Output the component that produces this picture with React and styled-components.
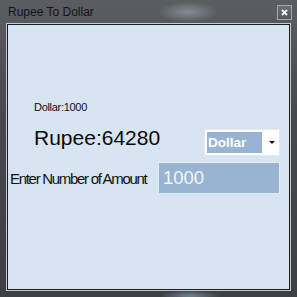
import React from 'react';
import styled, { createGlobalStyle } from 'styled-components';

const GlobalStyle = createGlobalStyle`
    html, body {
        margin: 0;
        padding: 0;
        background: #4b4e53;
    }
    * {
        box-sizing: border-box;
    }
`;

const Window = styled.div`
    width: 297px;
    height: 297px;
    display: flex;
    flex-direction: column;
    background:
        radial-gradient(ellipse 30px 10px at 188px 12px, rgba(170, 180, 190, 0.55), transparent),
        radial-gradient(ellipse 30px 6px at 190px 296px, rgba(150, 175, 200, 0.6), transparent),
        linear-gradient(to bottom, #5a5e63, #45484d 40%, #3d4044);
    font-family: "Liberation Sans", Arial, sans-serif;
`;

const TitleBar = styled.div`
    height: 22px;
    display: flex;
    align-items: center;
    justify-content: space-between;
    padding: 0 5px 0 8px;
`;

const Title = styled.span`
    font-size: 12px;
    color: #141414;
    padding-top: 2px;
`;

const CloseButton = styled.div`
    width: 15px;
    height: 15px;
    margin-top: 3px;
    border: 1px solid #a4a8ad;
    background: linear-gradient(to bottom, #6e7278, #52555b);
    display: flex;
    align-items: center;
    justify-content: center;
`;

const Frame = styled.div`
    flex: 1;
    margin: 1px 6px 6px 6px;
    border: 1px solid #c4c9ce;
    display: flex;
`;

const Client = styled.div`
    flex: 1;
    border: 1px solid #1c1c1c;
    background: #d7e4f2;
    padding: 76px 9px 0 2px;
    display: flex;
    flex-direction: column;
`;

const SmallLabel = styled.div`
    font-size: 11px;
    line-height: 13px;
    letter-spacing: -0.3px;
    color: #111;
    padding-left: 24px;
`;

const Row = styled.div`
    display: flex;
    align-items: ${({ align }) => align || 'center'};
    justify-content: space-between;
    margin-top: ${({ gap }) => gap}px;
`;

const BigValue = styled.div`
    font-size: 21px;
    line-height: 24px;
    color: #0a0a0a;
    padding-left: 24px;
`;

const Dropdown = styled.div`
    width: 76px;
    height: 27px;
    margin-top: 3px;
    background: #fff;
    border: 1px solid #e3e9f0;
    display: flex;
    align-items: center;
    padding: 2px;
`;

const Selected = styled.div`
    width: 55px;
    height: 21px;
    background: #99b4d1;
    color: #fff;
    font-weight: bold;
    font-size: 13.5px;
    line-height: 21px;
    padding-left: 1px;
`;

const Arrow = styled.div`
    margin-left: 7px;
    width: 0;
    height: 0;
    border-left: 3px solid transparent;
    border-right: 3px solid transparent;
    border-top: 3px solid #111;
`;

const FieldLabel = styled.div`
    font-size: 15px;
    letter-spacing: -1.3px;
    color: #111;
`;

const AmountInput = styled.input`
    width: 122px;
    height: 32px;
    border: 1px solid #e6ecf3;
    background: #99b4d1;
    color: #f2f6fa;
    font-family: "Liberation Sans", Arial, sans-serif;
    font-size: 18.5px;
    padding: 0 0 0 4px;
    outline: none;
`;

export default function App() {
    return (
        <>
            <GlobalStyle />
            <Window>
                <TitleBar>
                    <Title>Rupee To Dollar</Title>
                    <CloseButton>
                        <svg width="7" height="7" viewBox="0 0 7 7">
                            <path d="M1 1L6 6M6 1L1 6" stroke="#f4f4f4" strokeWidth="1.8" />
                        </svg>
                    </CloseButton>
                </TitleBar>
                <Frame>
                    <Client>
                        <SmallLabel>Dollar:1000</SmallLabel>
                        <Row gap={12} align="flex-start">
                            <BigValue>Rupee:64280</BigValue>
                            <Dropdown>
                                <Selected>Dollar</Selected>
                                <Arrow />
                            </Dropdown>
                        </Row>
                        <Row gap={6}>
                            <FieldLabel>Enter Number of Amount</FieldLabel>
                            <AmountInput defaultValue="1000" readOnly />
                        </Row>
                    </Client>
                </Frame>
            </Window>
        </>
    );
}
